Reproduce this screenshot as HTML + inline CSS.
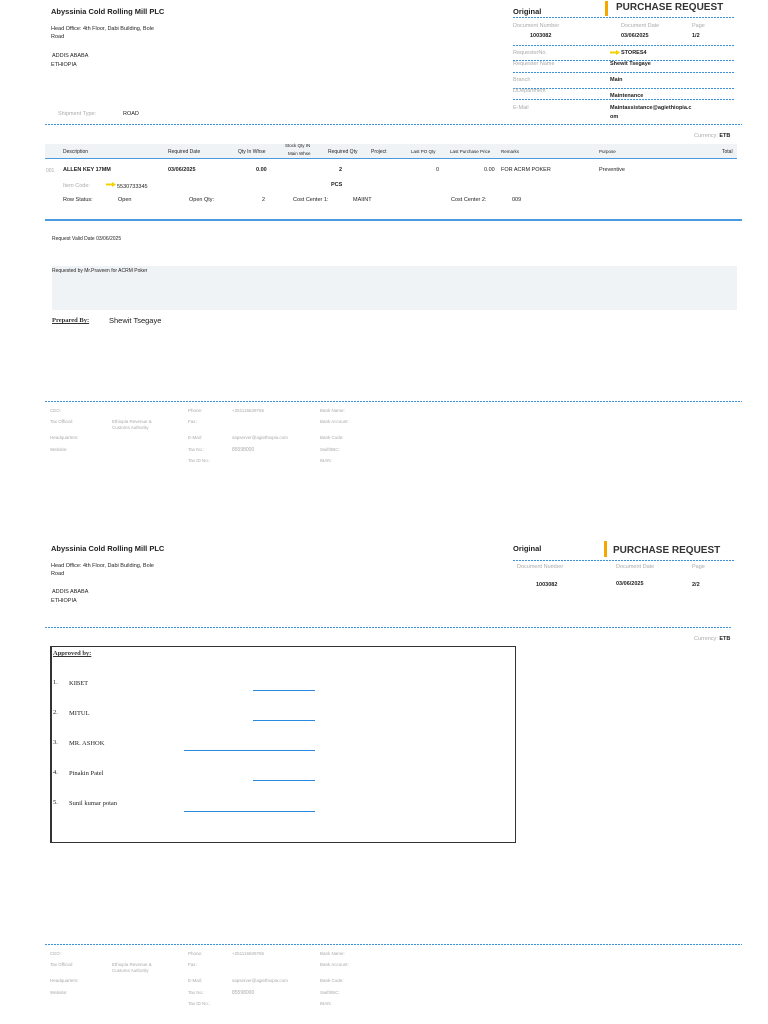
<!DOCTYPE html>
<html><head><meta charset="utf-8"><style>
body{margin:0;width:768px;height:1024px;background:#fff;position:relative;overflow:hidden;font-family:"Liberation Sans",sans-serif;}
.t{position:absolute;white-space:nowrap;font-size:5.5px;color:#222;line-height:1;}
.g{color:#aaa;}
.b{font-weight:bold;}
.d{position:absolute;height:1px;background:repeating-linear-gradient(90deg,#3a92dc 0 2px,#fff 2px 3px);}
.bar{position:absolute;width:3px;background:#f2a800;}
.ser{font-family:"Liberation Serif",serif;}
.ul{position:absolute;height:1px;background:#2a8ae0;}
.arr{position:absolute;width:10px;height:5px;}
</style></head><body>
<!-- PAGE 1 -->
<div class="t b" style="left:51px;top:8px;font-size:7.5px;">Abyssinia Cold Rolling Mill PLC</div>
<div class="t" style="left:51px;top:27px;">Head Office: 4th Floor, Dabi Building, Bole</div>
<div class="t" style="left:51px;top:35px;">Road</div>
<div class="t" style="left:52px;top:54px;">ADDIS ABABA</div>
<div class="t" style="left:51px;top:63px;">ETHIOPIA</div>
<div class="t g" style="left:58px;top:112px;">Shipment Type:</div>
<div class="t" style="left:123px;top:112px;">ROAD</div>
<div class="d" style="left:45px;top:124px;width:697px;"></div>

<div class="t b" style="left:513px;top:8px;font-size:7.5px;">Original</div>
<div class="bar" style="left:605px;top:1px;height:15px;"></div>
<div class="t b" style="left:616px;top:3px;font-size:10px;color:#333;">PURCHASE REQUEST</div>
<div class="d" style="left:513px;top:17px;width:221px;"></div>
<div class="t g" style="left:513px;top:24px;">Document Number</div>
<div class="t g" style="left:621px;top:24px;">Document Date</div>
<div class="t g" style="left:692px;top:24px;">Page</div>
<div class="t b" style="left:530px;top:34px;">1003082</div>
<div class="t b" style="left:621px;top:34px;">03/06/2025</div>
<div class="t b" style="left:692px;top:34px;">1/2</div>
<div class="d" style="left:513px;top:45px;width:221px;"></div>
<div class="t g" style="left:513px;top:51px;">RequesterNo.</div>
<svg class="arr" style="left:610px;top:50px" viewBox="0 0 10 5"><path d="M0 1.5H6V0L10 2.5L6 5V3.5H0Z" fill="#f5d000"/></svg>
<div class="t b" style="left:621px;top:51px;">STORES4</div>
<div class="d" style="left:513px;top:60px;width:221px;"></div>
<div class="t g" style="left:513px;top:62px;">Requester Name</div>
<div class="t b" style="left:610px;top:62px;">Shewit Tsegaye</div>
<div class="d" style="left:513px;top:72px;width:221px;"></div>
<div class="t g" style="left:513px;top:78px;">Branch</div>
<div class="t b" style="left:610px;top:78px;">Main</div>
<div class="d" style="left:513px;top:88px;width:221px;"></div>
<div class="t g" style="left:513px;top:89px;">DDepartment</div>
<div class="t b" style="left:610px;top:94px;">Maintenance</div>
<div class="d" style="left:513px;top:99px;width:221px;"></div>
<div class="t g" style="left:513px;top:106px;">E-Mail</div>
<div class="t b" style="left:610px;top:106px;">Maintassistance@agiethiopia.c</div>
<div class="t b" style="left:610px;top:115px;">om</div>

<div class="t g" style="left:694px;top:134px;">Currency: <b style="color:#222">ETB</b></div>
<div style="position:absolute;left:45px;top:144px;width:692px;height:14px;background:#f0f3f6;"></div>
<div style="position:absolute;left:45px;top:158px;width:692px;height:1px;background:#4a9ae0;"></div>
<div class="t" style="left:63px;top:150px;font-size:5px;">Description</div>
<div class="t" style="left:168px;top:150px;font-size:5px;">Required Date</div>
<div class="t" style="left:238px;top:150px;font-size:5px;">Qty In Whse</div>
<div class="t" style="left:285px;top:144px;font-size:4.5px;">Stock Qty IN</div>
<div class="t" style="left:288px;top:152px;font-size:4.5px;">Main Whse</div>
<div class="t" style="left:328px;top:150px;font-size:5px;">Required Qty</div>
<div class="t" style="left:371px;top:150px;font-size:5px;">Project</div>
<div class="t" style="left:411px;top:150px;font-size:4.5px;">Last PO Qty</div>
<div class="t" style="left:450px;top:150px;font-size:4.5px;">Last Purchase Price</div>
<div class="t" style="left:501px;top:150px;font-size:4.5px;">Remarks</div>
<div class="t" style="left:599px;top:150px;font-size:4.5px;">Purpose</div>
<div class="t" style="left:722px;top:150px;font-size:5px;">Total</div>
<div class="t g" style="left:46px;top:169px;font-size:5px;">001</div>
<div class="t b" style="left:63px;top:168px;">ALLEN KEY 17MM</div>
<div class="t b" style="left:168px;top:168px;">03/06/2025</div>
<div class="t b" style="left:256px;top:168px;">0.00</div>
<div class="t b" style="left:339px;top:168px;">2</div>
<div class="t" style="left:436px;top:168px;">0</div>
<div class="t" style="left:484px;top:168px;">0.00</div>
<div class="t" style="left:501px;top:168px;">FOR ACRM POKER</div>
<div class="t" style="left:599px;top:168px;">Preventive</div>
<div class="t g" style="left:63px;top:184px;">Item Code:</div>
<svg class="arr" style="left:106px;top:182px" viewBox="0 0 10 5"><path d="M0 1.5H6V0L10 2.5L6 5V3.5H0Z" fill="#f5d000"/></svg>
<div class="t" style="left:117px;top:185px;">5530733345</div>
<div class="t b" style="left:331px;top:183px;">PCS</div>
<div class="t" style="left:63px;top:198px;">Row Status:</div>
<div class="t" style="left:118px;top:198px;">Open</div>
<div class="t" style="left:189px;top:198px;">Open Qty:</div>
<div class="t" style="left:262px;top:198px;">2</div>
<div class="t" style="left:293px;top:198px;">Cost Center 1:</div>
<div class="t" style="left:353px;top:198px;">MAIINT</div>
<div class="t" style="left:451px;top:198px;">Cost Center 2:</div>
<div class="t" style="left:512px;top:198px;">009</div>
<div style="position:absolute;left:45px;top:219px;width:697px;height:2px;background:#4a9ae0;"></div>

<div class="t" style="left:52px;top:237px;font-size:5px;">Request Valid Date 03/06/2025</div>
<div style="position:absolute;left:52px;top:266px;width:685px;height:44px;background:#f0f3f6;"></div>
<div class="t" style="left:52px;top:269px;font-size:5px;">Requested by Mr.Praveen for ACRM Poker</div>
<div class="t ser b" style="left:52px;top:318px;font-size:6.5px;text-decoration:underline;color:#333;">Prepared By:</div>
<div class="t" style="left:109px;top:317px;font-size:7.5px;">Shewit Tsegaye</div>

<div class="d" style="left:45px;top:401px;width:697px;"></div>
<div class="t g" style="left:50px;top:409px;font-size:4.5px;">CEO:</div>
<div class="t g" style="left:50px;top:420px;font-size:4.5px;">Tax Official:</div>
<div class="t g" style="left:112px;top:420px;font-size:4.5px;">Ethiopia Revenue &amp;</div>
<div class="t g" style="left:112px;top:426px;font-size:4.5px;">Customs Authority</div>
<div class="t g" style="left:50px;top:436px;font-size:4.5px;">Headquarters:</div>
<div class="t g" style="left:50px;top:448px;font-size:4.5px;">Website:</div>
<div class="t g" style="left:188px;top:409px;font-size:4.5px;">Phone:</div>
<div class="t g" style="left:232px;top:409px;font-size:4.5px;">+251116639755</div>
<div class="t g" style="left:188px;top:420px;font-size:4.5px;">Fax:</div>
<div class="t g" style="left:188px;top:436px;font-size:4.5px;">E-Mail:</div>
<div class="t g" style="left:232px;top:436px;font-size:4.5px;">sapserver@agiethiopia.com</div>
<div class="t g" style="left:188px;top:448px;font-size:4.5px;">Tax No.:</div>
<div class="t g" style="left:232px;top:448px;font-size:5px;">85598000</div>
<div class="t g" style="left:188px;top:459px;font-size:4.5px;">Tax ID No.:</div>
<div class="t g" style="left:320px;top:409px;font-size:4.5px;">Bank Name:</div>
<div class="t g" style="left:320px;top:420px;font-size:4.5px;">Bank Account:</div>
<div class="t g" style="left:320px;top:436px;font-size:4.5px;">Bank Code:</div>
<div class="t g" style="left:320px;top:448px;font-size:4.5px;">Swift/BIC:</div>
<div class="t g" style="left:320px;top:459px;font-size:4.5px;">IBAN:</div>

<!-- PAGE 2 -->
<div class="t b" style="left:51px;top:545px;font-size:7.5px;">Abyssinia Cold Rolling Mill PLC</div>
<div class="t" style="left:51px;top:564px;">Head Office: 4th Floor, Dabi Building, Bole</div>
<div class="t" style="left:51px;top:572px;">Road</div>
<div class="t" style="left:52px;top:590px;">ADDIS ABABA</div>
<div class="t" style="left:51px;top:599px;">ETHIOPIA</div>
<div class="t b" style="left:513px;top:545px;font-size:7.5px;">Original</div>
<div class="bar" style="left:604px;top:541px;height:16px;"></div>
<div class="t b" style="left:613px;top:546px;font-size:10px;color:#333;">PURCHASE REQUEST</div>
<div class="d" style="left:513px;top:560px;width:221px;"></div>
<div class="t g" style="left:517px;top:565px;">Document Number</div>
<div class="t g" style="left:616px;top:565px;">Document Date</div>
<div class="t g" style="left:692px;top:565px;">Page</div>
<div class="t b" style="left:536px;top:583px;">1003082</div>
<div class="t b" style="left:616px;top:582px;">03/06/2025</div>
<div class="t b" style="left:692px;top:583px;">2/2</div>
<div class="d" style="left:45px;top:627px;width:686px;"></div>
<div class="t g" style="left:694px;top:637px;">Currency: <b style="color:#222">ETB</b></div>

<div style="position:absolute;left:50px;top:646px;width:463px;height:195px;border:1px solid #333;border-left-width:2px;"></div>
<div class="t ser b" style="left:53px;top:651px;font-size:6.5px;text-decoration:underline;color:#333;">Approved by:</div>
<div class="t ser" style="left:53px;top:680px;font-size:6.5px;">1.</div><div class="t ser" style="left:69px;top:681px;font-size:6.5px;">KIBET</div>
<div class="t ser" style="left:53px;top:710px;font-size:6.5px;">2.</div><div class="t ser" style="left:69px;top:711px;font-size:6.5px;">MITUL</div>
<div class="t ser" style="left:53px;top:740px;font-size:6.5px;">3.</div><div class="t ser" style="left:69px;top:741px;font-size:6.5px;">MR. ASHOK</div>
<div class="t ser" style="left:53px;top:770px;font-size:6.5px;">4.</div><div class="t ser" style="left:69px;top:771px;font-size:6.5px;">Pinakin Patel</div>
<div class="t ser" style="left:53px;top:800px;font-size:6.5px;">5.</div><div class="t ser" style="left:69px;top:801px;font-size:6.5px;">Sunil kumar potan</div>
<div class="ul" style="left:253px;top:690px;width:62px;"></div>
<div class="ul" style="left:253px;top:720px;width:62px;"></div>
<div class="ul" style="left:184px;top:750px;width:131px;"></div>
<div class="ul" style="left:253px;top:780px;width:62px;"></div>
<div class="ul" style="left:184px;top:811px;width:131px;"></div>

<div class="d" style="left:45px;top:944px;width:697px;"></div>
<div class="t g" style="left:50px;top:952px;font-size:4.5px;">CEO:</div>
<div class="t g" style="left:50px;top:963px;font-size:4.5px;">Tax Official:</div>
<div class="t g" style="left:112px;top:963px;font-size:4.5px;">Ethiopia Revenue &amp;</div>
<div class="t g" style="left:112px;top:969px;font-size:4.5px;">Customs Authority</div>
<div class="t g" style="left:50px;top:979px;font-size:4.5px;">Headquarters:</div>
<div class="t g" style="left:50px;top:991px;font-size:4.5px;">Website:</div>
<div class="t g" style="left:188px;top:952px;font-size:4.5px;">Phone:</div>
<div class="t g" style="left:232px;top:952px;font-size:4.5px;">+251116639755</div>
<div class="t g" style="left:188px;top:963px;font-size:4.5px;">Fax:</div>
<div class="t g" style="left:188px;top:979px;font-size:4.5px;">E-Mail:</div>
<div class="t g" style="left:232px;top:979px;font-size:4.5px;">sapserver@agiethiopia.com</div>
<div class="t g" style="left:188px;top:991px;font-size:4.5px;">Tax No.:</div>
<div class="t g" style="left:232px;top:991px;font-size:5px;">85598000</div>
<div class="t g" style="left:188px;top:1002px;font-size:4.5px;">Tax ID No.:</div>
<div class="t g" style="left:320px;top:952px;font-size:4.5px;">Bank Name:</div>
<div class="t g" style="left:320px;top:963px;font-size:4.5px;">Bank Account:</div>
<div class="t g" style="left:320px;top:979px;font-size:4.5px;">Bank Code:</div>
<div class="t g" style="left:320px;top:991px;font-size:4.5px;">Swift/BIC:</div>
<div class="t g" style="left:320px;top:1002px;font-size:4.5px;">IBAN:</div>
</body></html>
